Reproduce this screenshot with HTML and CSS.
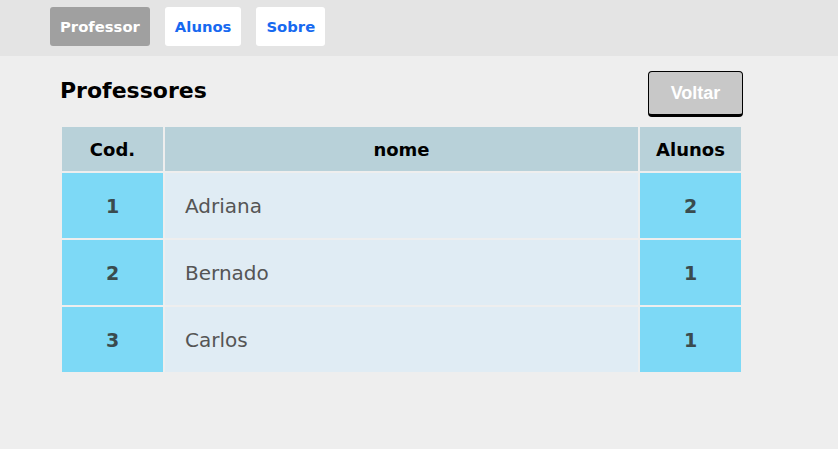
FILE: index.html
```html
<!DOCTYPE html>
<html>
  <head>
    <meta charset="utf-8" />
    <link rel="stylesheet" href="styles.css">
  </head>
  <body>
    <nav class="menu">
      <a class="menu_item active">Professor</a>
      <a class="menu_item">Alunos</a>
      <a class="menu_item">Sobre</a>
    </nav>
    <div class="content">
      <div class="top">
        <h1>Professores</h1>
        <button class="back">Voltar</button>
      </div>
      <table class="list">
        <thead>
          <tr>
            <th class="num">Cod.</th>
            <th>nome</th>
            <th class="num">Alunos</th>
          </tr>
        </thead>
        <tbody>
          <tr>
            <td class="num">1</td>
            <td class="name">Adriana</td>
            <td class="num">2</td>
          </tr>
          <tr>
            <td class="num">2</td>
            <td class="name">Bernado</td>
            <td class="num">1</td>
          </tr>
          <tr>
            <td class="num">3</td>
            <td class="name">Carlos</td>
            <td class="num">1</td>
          </tr>
        </tbody>
      </table>
    </div>
  </body>
</html>
```

FILE: styles.css
```css
*{
  box-sizing: border-box;
}
body{
  margin: 0px;
  background: #eeeeee;
  font-family: "DejaVu Sans", sans-serif;
}
.menu{
  display: flex;
  gap: 15px;
  height: 56px;
  padding: 7px 50px;
  background: #e4e4e4;
}
.menu_item{
  display: flex;
  align-items: center;
  height: 39px;
  padding: 0px 10px;
  border-radius: 3px;
  background: #fff;
  color: #1769f0;
  font-size: 14.8px;
  font-weight: bold;
  cursor: pointer;
}
.menu_item.active{
  background: #a0a0a0;
  color: #fff;
}
.content{
  width: 683px;
  margin-left: 60px;
  padding-top: 15px;
}
.top{
  display: flex;
  justify-content: space-between;
  align-items: flex-start;
}
h1{
  margin: 5px 0px 0px 0px;
  font-size: 22px;
  line-height: 30px;
  color: #000;
}
.back{
  width: 95px;
  height: 46px;
  border: 1px solid #000;
  border-bottom-width: 3px;
  border-radius: 4px;
  background: #c8c8c8;
  color: #fff;
  font-family: "Liberation Sans", Arial, sans-serif;
  font-size: 18px;
  font-weight: bold;
}
.list{
  width: 683px;
  margin-top: 8px;
  border-collapse: separate;
  border-spacing: 2px;
}
th{
  height: 44px;
  background: #b8d1d9;
  color: #000;
  font-size: 18px;
  font-weight: bold;
  padding: 0px;
}
th.num{
  width: 101px;
}
td{
  height: 65px;
  padding: 0px;
}
td.num{
  background: #7dd9f6;
  color: #3a4b4e;
  font-size: 19px;
  font-weight: bold;
  text-align: center;
}
td.name{
  background: #e0ecf4;
  color: #555;
  font-size: 20px;
  padding-left: 20px;
}
```
